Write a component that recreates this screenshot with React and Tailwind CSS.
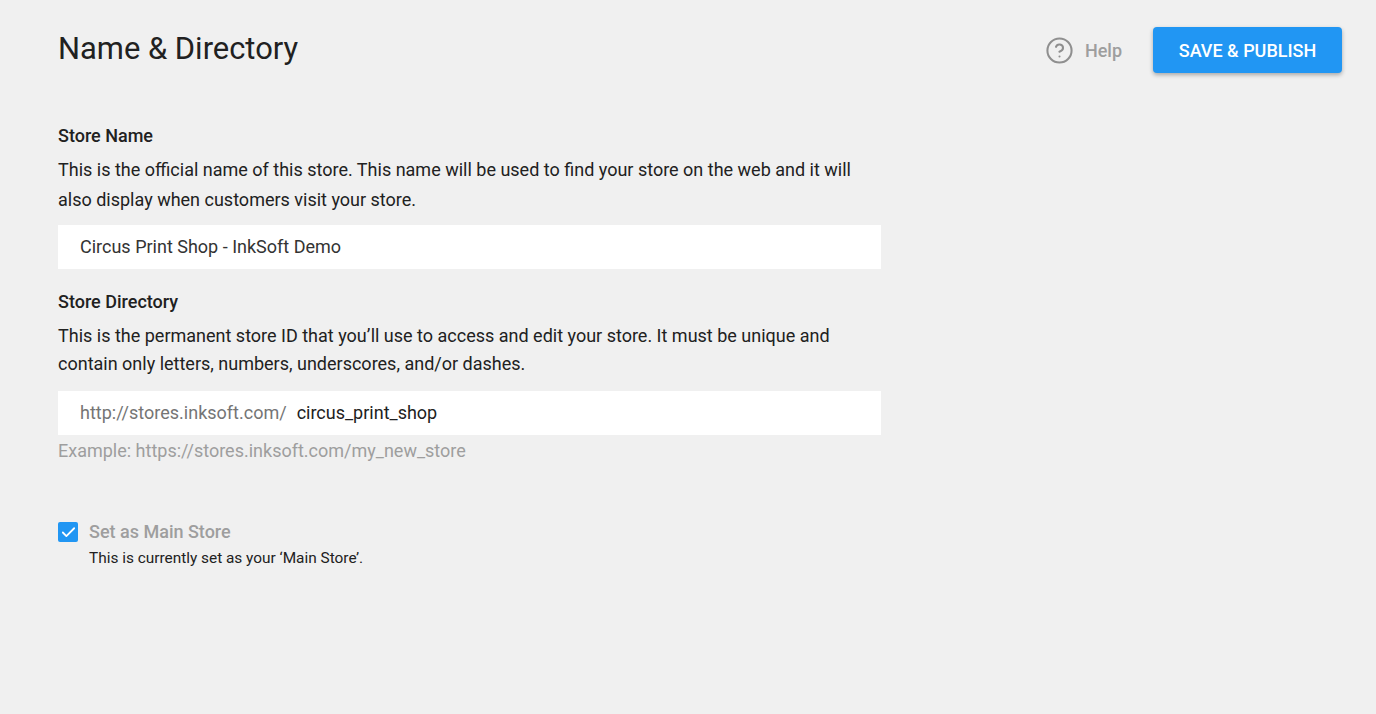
import { HelpCircle, Check } from "lucide-react";

export default function App() {
  return (
    <div className="min-h-[714px] h-[714px] overflow-hidden bg-[#f0f0f0] font-['Roboto',sans-serif] text-[#212121]">
      <div className="flex items-start justify-between pl-[58px] pr-[34px] pt-[27px]">
        <h1 className="text-[30.9px] leading-[44px] font-normal">Name &amp; Directory</h1>
        <div className="flex items-center">
          <HelpCircle className="w-[29px] h-[29px] text-[#8f8f8f]" strokeWidth={1.7} />
          <span className="ml-[11px] text-[18px] font-medium text-[#9e9e9e]">Help</span>
          <button className="ml-[31px] w-[189px] h-[46px] rounded bg-[#2196f3] text-white text-[18px] font-medium shadow-[0_2px_4px_rgba(0,0,0,0.3)]">
            SAVE &amp; PUBLISH
          </button>
        </div>
      </div>

      <div className="w-[823px] ml-[58px] mt-[50px]">
        <div className="text-[18px] leading-[26px] font-medium">Store Name</div>
        <p className="mt-[6px] text-[18px] leading-[29.5px]">
          This is the official name of this store. This name will be used to find your store on the web and it will also display when customers visit your store.
        </p>
        <div className="mt-[11px] h-[44px] bg-white pl-[22px] pb-[1px] flex items-center text-[18px] text-[#333]">
          Circus Print Shop - InkSoft Demo
        </div>

        <div className="mt-[20px] text-[18px] leading-[26px] font-medium">Store Directory</div>
        <p className="mt-[7px] text-[18px] leading-[28px]">
          This is the permanent store ID that you’ll use to access and edit your store. It must be unique and contain only letters, numbers, underscores, and/or dashes.
        </p>
        <div className="mt-[13px] h-[44px] bg-white pl-[22px] pb-[1px] flex items-center text-[18px]">
          <span className="text-[#757575]">http://stores.inksoft.com/</span>
          <span className="ml-[10px] text-[#212121]">circus_print_shop</span>
        </div>
        <div className="mt-[4px] text-[18px] leading-[24px] text-[#9e9e9e]">Example: https://stores.inksoft.com/my_new_store</div>

        <div className="mt-[57px] flex items-center">
          <div className="w-[20px] h-[20px] rounded-[2px] bg-[#2196f3] flex items-center justify-center">
            <Check className="w-[17px] h-[17px] text-white" strokeWidth={2.5} />
          </div>
          <span className="ml-[11px] text-[18px] leading-[24px] font-medium text-[#9e9e9e]">Set as Main Store</span>
        </div>
        <div className="ml-[31px] mt-[3px] text-[15.4px] leading-[22px]">This is currently set as your ‘Main Store’.</div>
      </div>
    </div>
  );
}
